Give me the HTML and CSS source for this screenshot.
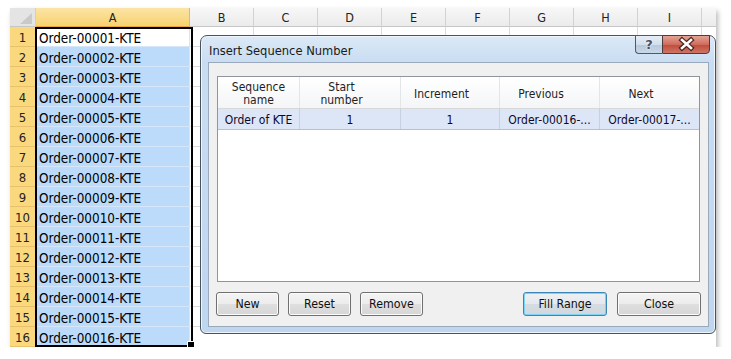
FILE: index.html
```html
<!DOCTYPE html>
<html lang="en">

<head>
    <meta charset="UTF-8">
    <meta name="viewport" content="width=device-width, initial-scale=1.0">
    <title>Insert Sequence Number</title>
    <link rel="stylesheet" href="styles.css">
</head>
<body>
    <div class="planilha">
        <div class="cabecalho">
            <span class="canto"></span>
            <span class="colA">A</span>
            <span class="colN">B</span>
            <span class="colN">C</span>
            <span class="colN">D</span>
            <span class="colN">E</span>
            <span class="colN">F</span>
            <span class="colN">G</span>
            <span class="colN">H</span>
            <span class="colN">I</span>
            <span class="colJ"></span>
        </div>
        <div class="linha"><span class="rh">1</span><span class="cel ativa">Order-00001-KTE</span><span class="resto"></span></div>
        <div class="linha"><span class="rh">2</span><span class="cel">Order-00002-KTE</span><span class="resto"></span></div>
        <div class="linha"><span class="rh">3</span><span class="cel">Order-00003-KTE</span><span class="resto"></span></div>
        <div class="linha"><span class="rh">4</span><span class="cel">Order-00004-KTE</span><span class="resto"></span></div>
        <div class="linha"><span class="rh">5</span><span class="cel">Order-00005-KTE</span><span class="resto"></span></div>
        <div class="linha"><span class="rh">6</span><span class="cel">Order-00006-KTE</span><span class="resto"></span></div>
        <div class="linha"><span class="rh">7</span><span class="cel">Order-00007-KTE</span><span class="resto"></span></div>
        <div class="linha"><span class="rh">8</span><span class="cel">Order-00008-KTE</span><span class="resto"></span></div>
        <div class="linha"><span class="rh">9</span><span class="cel">Order-00009-KTE</span><span class="resto"></span></div>
        <div class="linha"><span class="rh">10</span><span class="cel">Order-00010-KTE</span><span class="resto"></span></div>
        <div class="linha"><span class="rh">11</span><span class="cel">Order-00011-KTE</span><span class="resto"></span></div>
        <div class="linha"><span class="rh">12</span><span class="cel">Order-00012-KTE</span><span class="resto"></span></div>
        <div class="linha"><span class="rh">13</span><span class="cel">Order-00013-KTE</span><span class="resto"></span></div>
        <div class="linha"><span class="rh">14</span><span class="cel">Order-00014-KTE</span><span class="resto"></span></div>
        <div class="linha"><span class="rh">15</span><span class="cel">Order-00015-KTE</span><span class="resto"></span></div>
        <div class="linha"><span class="rh">16</span><span class="cel">Order-00016-KTE</span><span class="resto semGrade"></span></div>

        <!-- contorno da selecao A1:A16 -->
        <div class="selecao"></div>

        <section class="dialogo">
            <div class="barraTitulo">
                <span class="titulo">Insert Sequence Number</span>
                <div class="botoesJanela">
                    <span class="btAjuda">?</span>
                    <span class="btFechar">
                        <svg width="46" height="17" viewBox="0 0 46 17">
                            <path d="M19 4 L28 12 M28 4 L19 12" stroke="#4a2320" stroke-width="5" stroke-linecap="square" fill="none"/>
                            <path d="M19 4 L28 12 M28 4 L19 12" stroke="#ffffff" stroke-width="2.6" stroke-linecap="square" fill="none"/>
                        </svg>
                    </span>
                </div>
            </div>
            <div class="cliente">
                <div class="lista">
                    <div class="listaCab">
                        <span class="primeira">Sequence<br>name</span>
                        <span>Start<br>number</span>
                        <span>Increment</span>
                        <span>Previous</span>
                        <span>Next</span>
                    </div>
                    <div class="listaLinha">
                        <span>Order of KTE</span>
                        <span>1</span>
                        <span>1</span>
                        <span>Order-00016-...</span>
                        <span>Order-00017-...</span>
                    </div>
                </div>
                <div class="botoes">
                    <div class="grupo">
                        <button>New</button>
                        <button>Reset</button>
                        <button>Remove</button>
                    </div>
                    <div class="grupo grupoDir">
                        <button class="padrao">Fill Range</button>
                        <button>Close</button>
                    </div>
                </div>
            </div>
        </section>
    </div>
</body>

</html>
```

FILE: styles.css
```css
* {
    margin: 0;
    padding: 0;
    box-sizing: border-box;
}

body {
    background-color: #ffffff;
    font-family: "DejaVu Sans Condensed", "DejaVu Sans", sans-serif;
    font-size: 12px;
    color: #000;
}

.planilha {
    position: relative;
    width: 706px;
    margin: 8px 0 0 10px;
    background-color: #ffffff;
    box-shadow: 2px 3px 5px rgba(0, 0, 0, 0.28);
}

/* cabecalho das colunas */
.cabecalho {
    display: flex;
    height: 19px;
}

.cabecalho span {
    display: flex;
    align-items: center;
    justify-content: center;
    height: 19px;
    padding-top: 1px;
    font-size: 12.5px;
    color: #222;
    background: linear-gradient(#f7f7f7, #ebebeb);
    border-right: 1px solid #d2d2d2;
    border-bottom: 1px solid #c6c6c6;
}

.cabecalho .canto {
    width: 26px;
    justify-content: flex-end;
    align-items: flex-end;
    padding: 0 3px 2px 0;
    background: #e4e4e4;
    border-right: 1px solid #cfcfcf;
}

.canto::after {
    content: "";
    width: 0;
    height: 0;
    border-left: 12px solid transparent;
    border-bottom: 11px solid #c9c9c9;
}

.cabecalho .colA {
    width: 154px;
    background: linear-gradient(#fbe4a4, #f8d272);
    border-right: 1px solid #e9b85c;
    border-bottom: 1px solid #e8a73c;
}

.cabecalho .colN {
    width: 64px;
}

.cabecalho .colJ {
    width: 14px;
    border-right: none;
}

/* linhas */
.linha {
    display: flex;
    height: 20px;
}

.rh {
    width: 26px;
    height: 20px;
    text-align: center;
    line-height: 18px;
    padding-top: 2px;
    font-size: 13px;
    color: #222;
    background: #fad87e;
    border-right: 1px solid #e9b14a;
    border-bottom: 1px solid #e9c06c;
}

.cel {
    width: 154px;
    height: 20px;
    padding: 3px 0 0 3px;
    line-height: 17px;
    font-size: 13.4px;
    white-space: nowrap;
    background: #bcdbfb;
    border-right: 1px solid #d5e6f8;
    border-bottom: 1px solid #d5e6f8;
}

.cel.ativa {
    background: #ffffff;
}

.resto {
    flex: 1;
    height: 20px;
    border-bottom: 1px solid #dadcdd;
    background: repeating-linear-gradient(90deg, transparent 0 63px, #dadcdd 63px 64px);
}

.resto.semGrade {
    border-bottom: none;
    background: none;
}

.selecao {
    position: absolute;
    left: 25px;
    top: 19px;
    width: 158px;
    height: 320px;
    border: 2px solid #000;
    pointer-events: none;
}

.selecao::after {
    content: "";
    position: absolute;
    right: -4px;
    bottom: -4px;
    width: 6px;
    height: 6px;
    background: #000;
    border: 1px solid #fff;
}

/* janela */
.dialogo {
    position: absolute;
    left: 190px;
    top: 27px;
    width: 516px;
    height: 299px;
    display: flex;
    flex-direction: column;
    padding: 0 6px 6px 7px;
    border: 1px solid #4a525c;
    border-radius: 7px 7px 6px 6px;
    background: linear-gradient(#dce9f7, #c9ddf2 26px, #bfd6ef);
    box-shadow: inset 0 0 0 1px #eef5fc;
}

.barraTitulo {
    display: flex;
    height: 26px;
}

.titulo {
    align-self: center;
    padding: 2px 0 0 1px;
    font-size: 12.8px;
    color: #1a1a1a;
}

.botoesJanela {
    display: flex;
    margin: -1px -1px 0 auto;
    height: 19px;
}

.btAjuda {
    width: 27px;
    height: 19px;
    display: flex;
    align-items: center;
    justify-content: center;
    font-family: "DejaVu Sans", sans-serif;
    font-weight: bold;
    font-size: 13px;
    color: #4a525e;
    text-shadow: 0 0 2px #ffffff, 0 0 1px #ffffff;
    background: linear-gradient(#e6eef6, #d2dfec 50%, #b6c8dc 50%, #c9d8e8);
    border: 1px solid #4f5965;
    border-right: none;
    border-radius: 0 0 0 4px;
}

.btFechar {
    width: 48px;
    height: 19px;
    display: flex;
    align-items: center;
    justify-content: center;
    background: linear-gradient(#e3a396, #d06c5b 50%, #c04a3a 50%, #cd7565);
    border: 1px solid #4f3b39;
    border-radius: 0 0 4px 0;
}

.cliente {
    flex: 1;
    display: flex;
    flex-direction: column;
    padding: 13px 8px 9px 8px;
    background-color: #f0f0f0;
    border: 1px solid #9aa9bb;
}

.lista {
    height: 206px;
    background-color: #ffffff;
    border: 1px solid #8e959e;
}

.listaCab,
.listaLinha {
    display: grid;
    grid-template-columns: 82px 101px 99px 100px 1fr;
}

.listaCab {
    height: 32px;
    background: linear-gradient(#ffffff, #f4f5f7);
    border-bottom: 1px solid #d8d8d8;
}

.listaCab span {
    display: flex;
    align-items: center;
    justify-content: center;
    text-align: center;
    line-height: 13px;
    padding: 3px 17px 0 0;
    color: #1e1e1e;
    border-right: 1px solid #e3e5e8;
}

.listaCab span.primeira {
    padding-right: 0;
}

.listaLinha {
    height: 21px;
    background-color: #dce6f7;
    border-bottom: 1px solid #b7c2d1;
}

.listaLinha span {
    display: flex;
    align-items: center;
    justify-content: center;
    padding-top: 2px;
    white-space: nowrap;
    color: #10062a;
    border-right: 1px solid #c5d0e0;
}

.listaCab span:last-child,
.listaLinha span:last-child {
    border-right: none;
}

.botoes {
    display: flex;
    justify-content: space-between;
    margin: 10px -1px 0 -1px;
}

.grupo {
    display: flex;
    gap: 9px;
}

.grupoDir {
    gap: 10px;
}

button {
    width: 63px;
    height: 24px;
    font-family: "DejaVu Sans Condensed", "DejaVu Sans", sans-serif;
    font-size: 12.3px;
    color: #101010;
    background: linear-gradient(#f4f4f4, #ececec 50%, #dfdfdf 50%, #d6d6d6);
    border: 1px solid #707070;
    border-radius: 3px;
    box-shadow: inset 0 0 0 1px #fbfbfb;
}

.grupoDir button {
    width: 84px;
}

button.padrao {
    border-color: #3a86b8;
    background: linear-gradient(#eef1f4, #e4e8ec 50%, #d6dce2 50%, #d0d7de);
    box-shadow: inset 0 0 0 1px #7ed3f4;
}
```
